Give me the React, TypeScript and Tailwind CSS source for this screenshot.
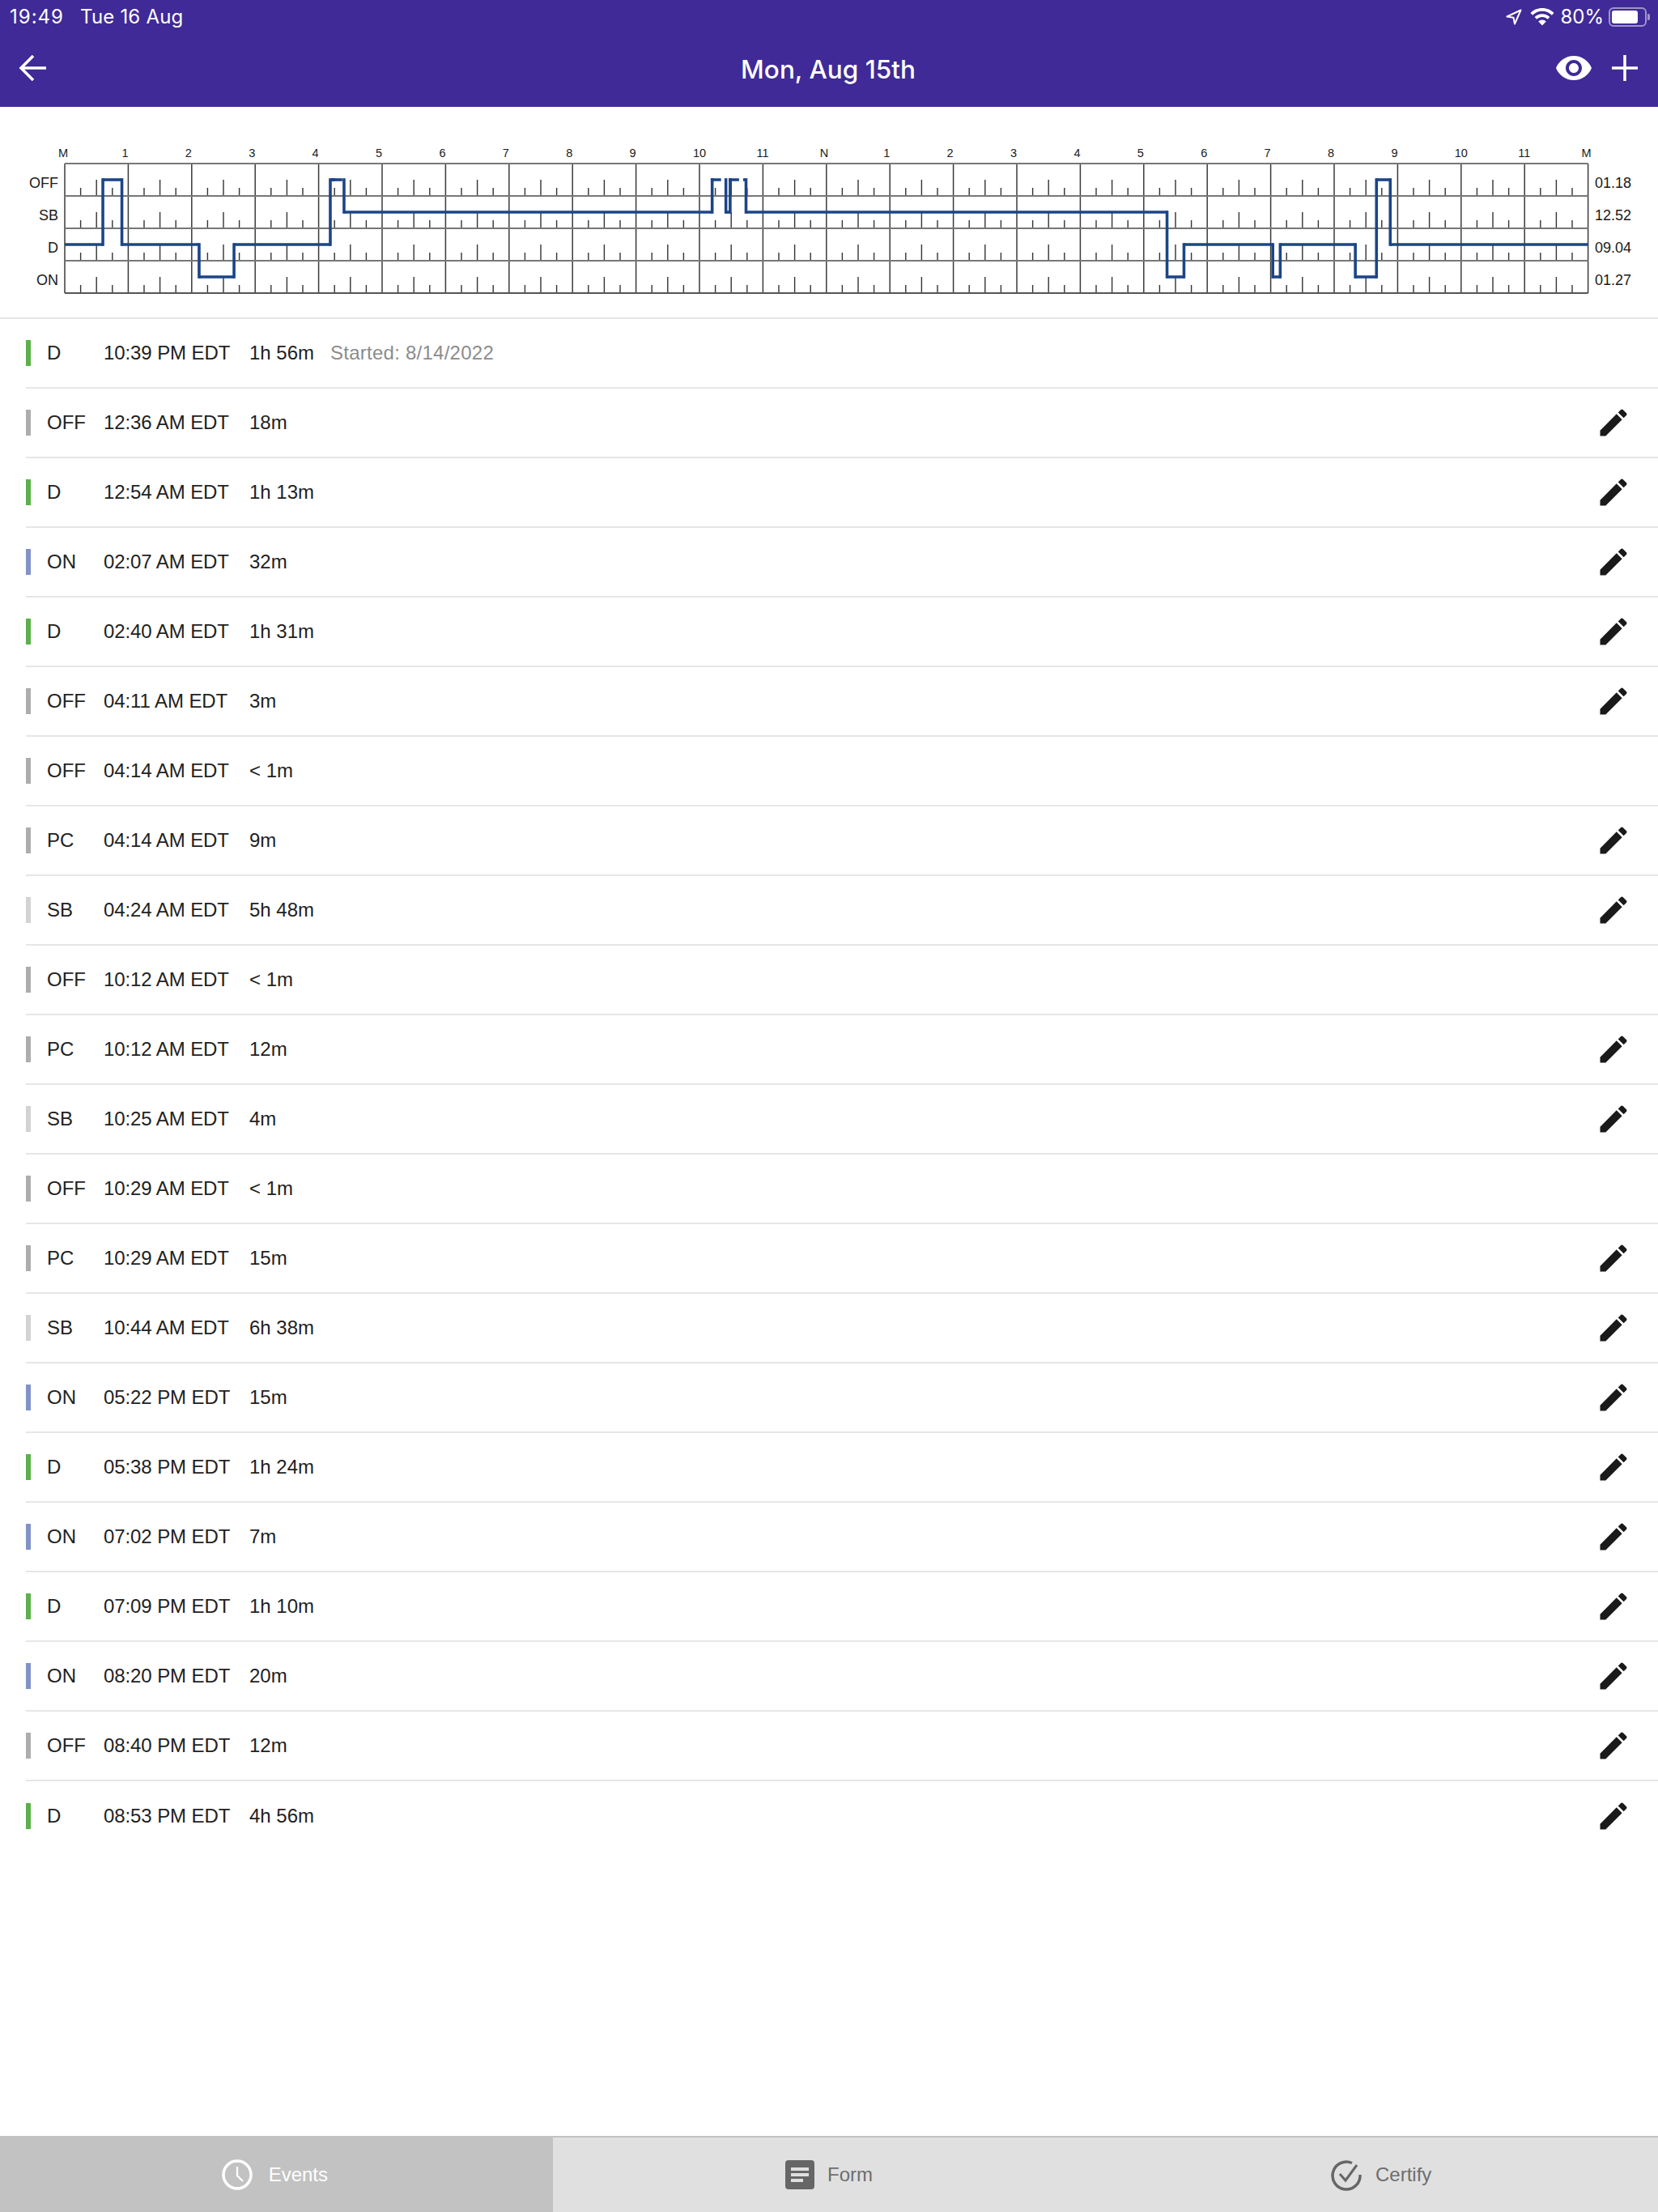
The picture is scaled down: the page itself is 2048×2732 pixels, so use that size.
import React from 'react';

type Status = 'D' | 'OFF' | 'ON' | 'SB' | 'PC';

interface LogEvent {
  status: Status;
  time: string;
  duration: string;
  note?: string;
  editable: boolean;
  hour: number; // hours since midnight, for the graph
}

const barColors: Record<Status, string> = {
  D: 'bg-[#5bb04a]',
  OFF: 'bg-[#adadad]',
  PC: 'bg-[#adadad]',
  SB: 'bg-[#d3d3d3]',
  ON: 'bg-[#8192c6]',
};

const at = (h: number, m: number) => h + m / 60;

const events: LogEvent[] = [
  { status: 'D', time: '10:39 PM EDT', duration: '1h 56m', note: 'Started: 8/14/2022', editable: false, hour: 0 },
  { status: 'OFF', time: '12:36 AM EDT', duration: '18m', editable: true, hour: at(0, 36) },
  { status: 'D', time: '12:54 AM EDT', duration: '1h 13m', editable: true, hour: at(0, 54) },
  { status: 'ON', time: '02:07 AM EDT', duration: '32m', editable: true, hour: at(2, 7) },
  { status: 'D', time: '02:40 AM EDT', duration: '1h 31m', editable: true, hour: at(2, 40) },
  { status: 'OFF', time: '04:11 AM EDT', duration: '3m', editable: true, hour: at(4, 11) },
  { status: 'OFF', time: '04:14 AM EDT', duration: '< 1m', editable: false, hour: at(4, 14) },
  { status: 'PC', time: '04:14 AM EDT', duration: '9m', editable: true, hour: at(4, 14) },
  { status: 'SB', time: '04:24 AM EDT', duration: '5h 48m', editable: true, hour: at(4, 24) },
  { status: 'OFF', time: '10:12 AM EDT', duration: '< 1m', editable: false, hour: at(10, 12) },
  { status: 'PC', time: '10:12 AM EDT', duration: '12m', editable: true, hour: at(10, 12) },
  { status: 'SB', time: '10:25 AM EDT', duration: '4m', editable: true, hour: at(10, 25) },
  { status: 'OFF', time: '10:29 AM EDT', duration: '< 1m', editable: false, hour: at(10, 29) },
  { status: 'PC', time: '10:29 AM EDT', duration: '15m', editable: true, hour: at(10, 29) },
  { status: 'SB', time: '10:44 AM EDT', duration: '6h 38m', editable: true, hour: at(10, 44) },
  { status: 'ON', time: '05:22 PM EDT', duration: '15m', editable: true, hour: at(17, 22) },
  { status: 'D', time: '05:38 PM EDT', duration: '1h 24m', editable: true, hour: at(17, 38) },
  { status: 'ON', time: '07:02 PM EDT', duration: '7m', editable: true, hour: at(19, 2) },
  { status: 'D', time: '07:09 PM EDT', duration: '1h 10m', editable: true, hour: at(19, 9) },
  { status: 'ON', time: '08:20 PM EDT', duration: '20m', editable: true, hour: at(20, 20) },
  { status: 'OFF', time: '08:40 PM EDT', duration: '12m', editable: true, hour: at(20, 40) },
  { status: 'D', time: '08:53 PM EDT', duration: '4h 56m', editable: true, hour: at(20, 53) },
];

// graph geometry, in page pixels
const GX = 80;
const GY = 202;
const HOUR = 78.4;
const ROW = 40;

const hourLabels = ['M', '1', '2', '3', '4', '5', '6', '7', '8', '9', '10', '11', 'N', '1', '2', '3', '4', '5', '6', '7', '8', '9', '10', '11', 'M'];
const rowLabels = ['OFF', 'SB', 'D', 'ON'];
const totals = ['01.18', '12.52', '09.04', '01.27'];

const rowOf = (s: Status) => (s === 'OFF' || s === 'PC' ? 0 : s === 'SB' ? 1 : s === 'D' ? 2 : 3);
const xOf = (h: number) => GX + h * HOUR;
const yOf = (s: Status) => GY + rowOf(s) * ROW + 20;

const LogGraph = () => {
  const segments = events.map((e, i) => ({
    e,
    x1: xOf(e.hour),
    x2: xOf(i + 1 < events.length ? events[i + 1].hour : 24),
    y: yOf(e.status),
    nextY: i + 1 < events.length ? yOf(events[i + 1].status) : null,
  }));

  return (
    <svg width={2048} height={260} viewBox="0 132 2048 260" className="block">
      {/* ticks */}
      {rowLabels.map((_, r) =>
        Array.from({ length: 24 }).map((_, h) =>
          [1, 2, 3].map((q) => (
            <line
              key={`${r}-${h}-${q}`}
              x1={xOf(h + q / 4)}
              x2={xOf(h + q / 4)}
              y1={GY + (r + 1) * ROW}
              y2={GY + (r + 1) * ROW - (q === 2 ? 20 : 10)}
              stroke="#333"
              strokeWidth={1.4}
            />
          )),
        ),
      )}
      {/* grid */}
      {Array.from({ length: 25 }).map((_, h) => (
        <line key={h} x1={xOf(h)} x2={xOf(h)} y1={GY} y2={GY + 4 * ROW} stroke="#3a3a3a" strokeWidth={1.5} />
      ))}
      {[0, 1, 2, 3, 4].map((r) => (
        <line key={r} x1={GX} x2={xOf(24)} y1={GY + r * ROW} y2={GY + r * ROW} stroke={r === 4 ? '#555' : '#777'} strokeWidth={2} />
      ))}
      {/* duty line */}
      {segments.map(({ e, x1, x2, y, nextY }, i) => (
        <g key={i} stroke="#1c4587" strokeWidth={3.6} fill="none" strokeLinecap="square">
          <line x1={x1} x2={x2} y1={y} y2={y} strokeDasharray={e.status === 'PC' ? '11 5' : undefined} strokeLinecap="butt" />
          {nextY !== null && <line x1={x2} x2={x2} y1={y} y2={nextY} />}
        </g>
      ))}
      {/* labels */}
      <g fontFamily="'Liberation Sans', Arial, sans-serif" fill="#1a1a1a">
        {hourLabels.map((l, h) => (
          <text key={h} x={xOf(h) - 8} y={194} fontSize={14.5}>
            {l}
          </text>
        ))}
        {rowLabels.map((l, r) => (
          <text key={l} x={72} y={GY + r * ROW + 30} fontSize={18} textAnchor="end">
            {l}
          </text>
        ))}
        {totals.map((l, r) => (
          <text key={l} x={1970} y={GY + r * ROW + 30} fontSize={18}>
            {l}
          </text>
        ))}
      </g>
    </svg>
  );
};

const PencilIcon = () => (
  <svg width={44} height={44} viewBox="0 0 24 24" fill="#1a1a1a">
    <path d="M3 17.25V21h3.75L17.81 9.94l-3.75-3.75L3 17.25zM20.71 7.04c.39-.39.39-1.02 0-1.41l-2.34-2.34c-.39-.39-1.02-.39-1.41 0l-1.83 1.83 3.75 3.75 1.83-1.83z" />
  </svg>
);

const EventRow = ({ event }: { event: LogEvent }) => (
  <div className="ml-[32px] h-[86px] flex items-center border-b-2 border-[#e6e6e6] last:border-b-0 pr-[33px] text-[24px] text-[#222222]">
    <div className={`w-[6px] h-[32px] ${barColors[event.status]}`}></div>
    <span className="ml-[20px] w-[70px]">{event.status}</span>
    <span className="w-[180px] tracking-[-0.1px]">{event.time}</span>
    <span className="min-w-[100px]">{event.duration}</span>
    {event.note && <span className="text-[#8c8c8c] tracking-[0.25px]">{event.note}</span>}
    {event.editable && (
      <div className="ml-auto">
        <PencilIcon />
      </div>
    )}
  </div>
);

const StatusBar = () => (
  <div className="h-[42px] flex items-center pl-[12px] pr-[10px] text-white text-[24px] font-['Inter',sans-serif]">
    <span className="tracking-[1px]">19:49</span>
    <span className="ml-[20px] tracking-[0.2px]">Tue 16 Aug</span>
    <div className="ml-auto flex items-center">
      <svg width={20} height={20} viewBox="0 0 20 20" fill="none" stroke="white" strokeWidth={2} strokeLinejoin="round">
        <path d="M18.5 1.5 1.5 9.5l8 1.2 1.5 7.8z" />
      </svg>
      <svg width={30} height={22} viewBox="0 0 30 22" fill="white" className="ml-[10px]">
        <path d="M15 0C9 0 4 2.3 0.5 6l2.6 2.8C6.2 5.6 10.4 3.7 15 3.7s8.8 1.9 11.9 5.1L29.5 6C26 2.3 21 0 15 0z" />
        <path d="M15 7.2c-3.7 0-7 1.5-9.4 3.9l2.6 2.7c1.8-1.8 4.200-2.900 6.800-2.900s5 1.100 6.800 2.900l2.600-2.700C22 8.700 18.700 7.200 15 7.200z" />
        <path d="M15 14.500c-1.900 0-3.600.8-4.800 2L15 21.500l4.800-5c-1.200-1.200-2.900-2-4.800-2z" />
      </svg>
      <span className="ml-[7px]">80%</span>
      <div className="ml-[6px] w-[47px] h-[24px] rounded-[6px] border-2 border-white/50 p-[2px]">
        <div className="w-[32px] h-full rounded-[3px] bg-white"></div>
      </div>
      <div className="ml-[1px] w-[3px] h-[8px] rounded-r-[2px] bg-white/50"></div>
    </div>
  </div>
);

const NavBar = () => (
  <div className="h-[84px] flex items-center px-[23px] text-white">
    <div className="flex-1">
      <svg width={34} height={34} viewBox="0 0 34 34" fill="none" stroke="white" strokeWidth={3.5} className="block">
        <path d="M34 17H3M18 2 3 17l15 15" />
      </svg>
    </div>
    <h1 className="pt-[3px] text-[31.5px] font-medium font-['Inter',sans-serif]">Mon, Aug 15th</h1>
    <div className="flex-1 flex items-center justify-end gap-[23px] pr-[2px]">
      <svg width={48} height={48} viewBox="0 0 24 24" fill="white">
        <path d="M12 4.500C7 4.500 2.730 7.610 1 12c1.730 4.390 6 7.500 11 7.500s9.270-3.110 11-7.500c-1.730-4.390-6-7.500-11-7.500zM12 17c-2.760 0-5-2.240-5-5s2.240-5 5-5 5 2.240 5 5-2.240 5-5 5zm0-8c-1.660 0-3 1.340-3 3s1.340 3 3 3 3-1.340 3-3-1.340-3-3-3z" />
      </svg>
      <svg width={32} height={32} viewBox="0 0 32 32" stroke="white" strokeWidth={3.500}>
        <path d="M16 0v32M0 16h32" />
      </svg>
    </div>
  </div>
);

const TabBar = () => (
  <div className="h-[94px] grid grid-cols-3 border-t-2 border-[#c2c2c2] text-[24px]">
    <div className="bg-[#c2c2c2] flex items-center justify-center gap-[20px] pr-[4px] text-white">
      <svg width={38} height={38} viewBox="0 0 38 38" fill="none" stroke="white">
        <circle cx={19} cy={19} r={17} strokeWidth={3.500} />
        <path d="M19 9v11l7 7" strokeWidth={2.200} />
      </svg>
      <span>Events</span>
    </div>
    <div className="bg-[#e0e0e0] flex items-center justify-center gap-[16px] text-[#6e6e6e]">
      <svg width={36} height={36} viewBox="0 0 36 36">
        <rect width={36} height={36} rx={4} fill="#666" />
        <path d="M7 9h22v4H7zM7 16h22v4H7zM7 23h15v4H7z" fill="#e0e0e0" />
      </svg>
      <span>Form</span>
    </div>
    <div className="bg-[#e0e0e0] flex items-center justify-center gap-[16px] pr-[2px] text-[#6e6e6e]">
      <svg width={40} height={40} viewBox="0 0 40 40" fill="none" stroke="#666">
        <path d="M27 5.500A17 17 0 1 0 37 20" strokeWidth={3.500} />
        <path d="M12 19l7 8 14-19" strokeWidth={3} />
      </svg>
      <span>Certify</span>
    </div>
  </div>
);

export default function App() {
  return (
    <div className="w-[2048px] h-[2732px] flex flex-col bg-white font-['Liberation_Sans',Arial,sans-serif]">
      <header className="h-[132px] bg-[#3f2a97] shrink-0">
        <StatusBar />
        <NavBar />
      </header>
      <div className="border-b-2 border-[#e6e6e6] h-[262px] shrink-0">
        <LogGraph />
      </div>
      <div className="flex-1">
        {events.map((e, i) => (
          <EventRow key={i} event={e} />
        ))}
      </div>
      <TabBar />
    </div>
  );
}
